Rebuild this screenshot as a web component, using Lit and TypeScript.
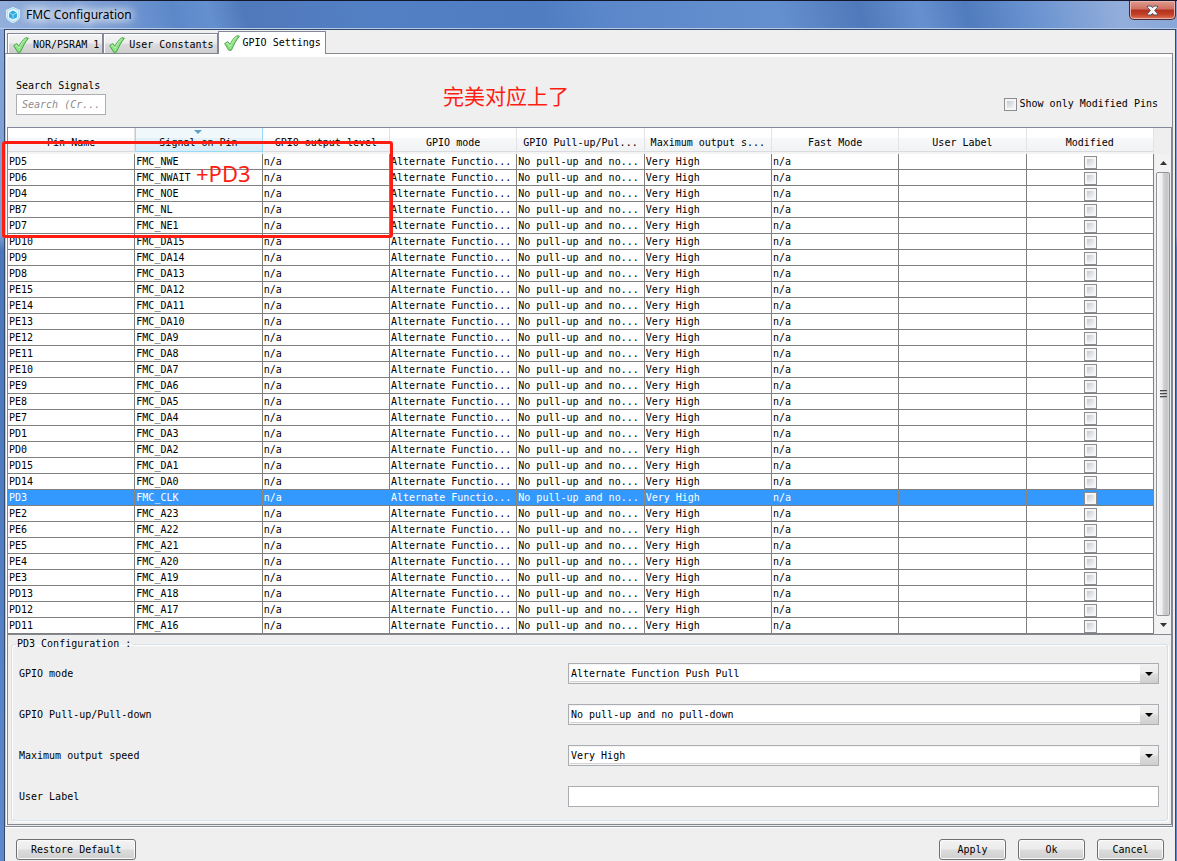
import { LitElement, html, css, svg, nothing } from "lit";
import { customElement, property, state } from "lit/decorators.js";
import { classMap } from "lit/directives/class-map.js";

interface Pin {
  pin: string;
  signal: string;
}

const row = (line: string): Pin => {
  const [pin, signal] = line.split(" ");
  return { pin, signal };
};

const PINS: Pin[] = [
  "PD5 FMC_NWE", "PD6 FMC_NWAIT", "PD4 FMC_NOE", "PB7 FMC_NL", "PD7 FMC_NE1",
  "PD10 FMC_DA15", "PD9 FMC_DA14", "PD8 FMC_DA13", "PE15 FMC_DA12", "PE14 FMC_DA11",
  "PE13 FMC_DA10", "PE12 FMC_DA9", "PE11 FMC_DA8", "PE10 FMC_DA7", "PE9 FMC_DA6",
  "PE8 FMC_DA5", "PE7 FMC_DA4", "PD1 FMC_DA3", "PD0 FMC_DA2", "PD15 FMC_DA1",
  "PD14 FMC_DA0", "PD3 FMC_CLK", "PE2 FMC_A23", "PE6 FMC_A22", "PE5 FMC_A21",
  "PE4 FMC_A20", "PE3 FMC_A19", "PD13 FMC_A18", "PD12 FMC_A17", "PD11 FMC_A16",
].map(row);

const COLUMNS = [
  "Pin Name", "Signal on Pin", "GPIO output level", "GPIO mode", "GPIO Pull-up/Pul...",
  "Maximum output s...", "Fast Mode", "User Label", "Modified",
];

const baseStyles = css`
  *, *::before, *::after { box-sizing: border-box; }
  button, input, select {
    font: inherit;
    color: inherit;
    margin: 0;
    appearance: none;
    border-radius: 0;
  }
  .check {
    display: block;
    width: 13px;
    height: 13px;
    border: 1px solid #8b8d90;
    background: linear-gradient(135deg, #c6cbd2, #f6f6f6) content-box, #f6f6f6;
    padding: 2px;
  }
  .check:checked { background: linear-gradient(#3a6ea5, #3a6ea5) content-box, #f4f4f4; }
`;

@customElement("title-bar")
class TitleBar extends LitElement {
  static styles = [baseStyles, css`
    :host {
      display: flex;
      align-items: flex-start;
      justify-content: space-between;
      height: 29px;
      border-top: 1px solid #14182c;
      border-bottom: 1px solid #b4cdec;
      background: linear-gradient(75deg, #93afdc 0, #7fa0d6 8%, #5c88ca 15%, #6590cf 18%, #5079bb 21%,
        #5380c4 32%, #507dc2 46%, #5c88cb 52%, #6590cf 66%, #4f79ba 73%, #6690cf 78%,
        #507bbd 82%, #6791cf 87%, #93aedb 95%, #86a6d8 100%);
    }
    .name { display: flex; align-items: center; gap: 6px; padding: 5px 0 0 6px; }
    .logo { width: 14px; height: 16px; flex: none; }
    h1 {
      margin: 0;
      font: 400 12px/18px "Noto Sans", sans-serif;
      color: #000;
      text-shadow: 0 0 8px #fff, 0 0 8px #fff, 0 0 12px #fff, 0 0 16px #e6eefa;
    }
    .close {
      display: grid;
      place-items: center;
      width: 47px;
      height: 19px;
      margin-right: 1px;
      padding: 0;
      border: 1px solid #4b2634;
      border-top: 0;
      border-radius: 0 0 5px 5px;
      box-shadow: inset 0 0 0 1px #e9b3aa;
      background: linear-gradient(#dd9c90 0, #cf6f60 45%, #b2301c 50%, #c3402a 75%, #dd7757 100%);
    }
    .close svg { width: 13px; height: 11px; }
  `];

  render() {
    return html`
      <div class="name">
        <svg class="logo" viewBox="0 0 14 16" aria-hidden="true">
          <path d="M7 0l7 3v6c0 3-3 5.600-7 7-4-1.400-7-4-7-7V3z" fill="#eaf7fd"/>
          <path d="M7 1.200l5.800 2.600v5.200c0 2.600-2.400 4.600-5.800 5.800C3.600 13.600 1.200 11.600 1.200 9V3.800z" fill="none" stroke="#7fcbea" stroke-width=".7"/>
          <path d="M7 3.500l4 2.200v4.600l-4 2.200-4-2.200V5.700z" fill="#2fa9df"/>
          <path d="M3 5.700l4 2.200 4-2.200M7 7.900v4.600" fill="none" stroke="#b9e6f8" stroke-width=".8"/>
        </svg>
        <h1>FMC Configuration</h1>
      </div>
      <button class="close" aria-label="Close">
        <svg viewBox="0 0 13 11" aria-hidden="true">
          <path d="M1.500 1h3.600l1.400 1.700L7.900 1h3.600v1.300L8.700 5.500l2.800 3.200V10H7.900L6.500 8.300 5.100 10H1.500V8.700l2.800-3.200-2.800-3.200z" fill="#f5f5f5" stroke="#535666" stroke-width="1"/>
        </svg>
      </button>
    `;
  }
}

@customElement("tab-strip")
class TabStrip extends LitElement {
  @property({ type: Array }) tabs: string[] = [];
  @property({ type: Number }) selected = 0;

  static styles = [baseStyles, css`
    :host { display: flex; align-items: flex-end; height: 23px; padding-left: 2px; margin-bottom: -1px; }
    .tab {
      display: flex;
      align-items: center;
      gap: 4px;
      height: 20px;
      margin-bottom: 1px;
      padding: 2px 3px 0 5px;
      border: 1px solid #83879a;
      border-bottom: 0;
      background: linear-gradient(#f4f4f4 0, #ececec 48%, #dcdcdc 52%, #cecece 100%);
      box-shadow: inset 1px 1px #fff;
      white-space: nowrap;
    }
    .tab.on { position: relative; height: 23px; margin: 0; padding: 0 4px 0 5px; gap: 3px; background: #fff; }
    .tick { width: 16px; height: 16px; flex: none; }
  `];

  render() {
    return this.tabs.map((t, i) => html`
      <button role="tab" aria-selected=${i === this.selected}
        class=${classMap({ tab: true, on: i === this.selected })}
        @click=${() => (this.selected = i)}>
        <svg class="tick" viewBox="0 0 16 16" aria-hidden="true">
          <path d="M.7 8.600l3.100-2 2.300 3C7.500 5.800 10.200 2.400 13 .7l2.400.5C12.400 4.800 9.600 10 7.400 15.200l-2.600.1z"
            fill="#8ee283" stroke="#39a03c" stroke-width=".9" stroke-linejoin="round"/>
          <path d="M2.200 8.900l1.300-1 2.500 3.300C8 7 10 4 12.800 1.800" fill="none" stroke="#c9f5c0" stroke-width=".9"/>
        </svg>
        <span>${t}</span>
      </button>`);
  }
}

@customElement("pin-table")
class PinTable extends LitElement {
  @property() selected = "PD3";

  static styles = [baseStyles, css`
    :host {
      display: flex;
      border: 1px solid #83879a;
      border-bottom-color: #83878f;
      background: #efefef;
    }
    .view { flex: 1; min-width: 0; }
    table { width: 100%; table-layout: fixed; border-collapse: separate; border-spacing: 0; }
    th {
      position: relative;
      height: 26px;
      padding: 5px 1px 0;
      border-right: 1px solid #e1e3e6;
      border-bottom: 2px solid #f4f4f4;
      background: linear-gradient(#fff 0, #fff 40%, #f7f8fa 42%, #f1f3f5 95%, #d9dbde 96%);
      font-weight: 400;
      text-align: center;
      white-space: nowrap;
      overflow: hidden;
    }
    th.sorted {
      border-right-color: #96d9f9;
      box-shadow: inset 1px 0 #96d9f9;
      background: linear-gradient(#f2f9fc 0, #f0f8fc 40%, #e2f1f9 42%, #d9edf7 94%, #96d9f9 95%);
    }
    .arrow { position: absolute; top: 2px; left: 50%; width: 8px; height: 4px; margin-left: -4px; }
    td {
      height: 16px;
      padding: 1px 0 0 1px;
      border-right: 1px solid #808080;
      border-bottom: 1px solid #808080;
      background: #fff;
      line-height: 14px;
      white-space: nowrap;
      overflow: hidden;
    }
    td .check { margin: 0 auto; }
    tr.on td { background: #3399ff; color: #fff; border-right-color: #8f8478; }
    .bar {
      display: flex;
      flex-direction: column;
      width: 17px;
      padding: 26px 1px 0 2px;
    }
    .step {
      display: grid;
      place-items: center;
      height: 18px;
      padding: 0;
      border: 0;
      background: #f2f2f2;
    }
    .step svg { width: 7px; height: 4px; }
    .thumb {
      flex: 1;
      display: grid;
      place-items: center;
      border: 1px solid #929498;
      border-radius: 2px;
      background: linear-gradient(90deg, #fafafa 0, #ededed 45%, #d2d3d6 50%, #c4c5c9 85%, #dcdcde 100%);
    }
    .thumb svg { width: 7px; height: 9px; }
  `];

  render() {
    return html`
      <div class="view"><table>
        <thead><tr>${COLUMNS.map((c, i) => html`
          <th class=${i === 1 ? "sorted" : ""}>${i === 1
            ? html`<svg class="arrow" viewBox="0 0 8 4" aria-hidden="true"><path d="M0 0h8L4 4z" fill="#5fa3c4"/></svg>`
            : nothing}${c}</th>`)}</tr></thead>
        <tbody>${PINS.map((p) => html`
          <tr class=${p.pin === this.selected ? "on" : ""} @click=${() => (this.selected = p.pin)}>
            <td>${p.pin}</td>
            <td>${p.signal}</td>
            <td>n/a</td>
            <td>Alternate Functio...</td>
            <td>No pull-up and no...</td>
            <td>Very High</td>
            <td>n/a</td>
            <td></td>
            <td><input class="check" type="checkbox" aria-label="${p.pin} modified"></td>
          </tr>`)}</tbody>
      </table></div>
      <div class="bar">
        <button class="step" aria-label="Scroll up">
          <svg viewBox="0 0 7 4" aria-hidden="true"><path d="M0 4h7L3.500 0z" fill="#333"/></svg>
        </button>
        <div class="thumb">
          <svg viewBox="0 0 7 9" aria-hidden="true">${[0, 3, 6].map((y) => svg`
            <path d="M0 ${y + 0.5}h7" stroke="#4a4a4a"/><path d="M0 ${y + 1.5}h7" stroke="#b5b5b5"/>`)}</svg>
        </div>
        <button class="step" aria-label="Scroll down">
          <svg viewBox="0 0 7 4" aria-hidden="true"><path d="M0 0h7L3.500 4z" fill="#333"/></svg>
        </button>
      </div>
    `;
  }
}

@customElement("pin-form")
class PinForm extends LitElement {
  @property() pin = "PD3";

  static styles = [baseStyles, css`
    :host { display: block; padding: 2px 3px 3px; border: 1px solid #83878f; border-top: 0; }
    fieldset {
      margin: 0;
      padding: 12px 8px 13px 7px;
      border: 1px solid #d5dfe5;
      border-radius: 3px;
      box-shadow: inset 1px 1px #fff, 1px 1px #fff;
    }
    legend { margin-left: -3px; padding: 0 2px 0 1px; line-height: 14px; }
    .grid {
      display: grid;
      grid-template-columns: 549fr 591fr;
      row-gap: 20px;
      align-items: center;
    }
    .field {
      width: 100%;
      height: 21px;
      padding: 0 3px;
      border: 1px solid #abadb3;
      background: #fff;
    }
    .combo { display: grid; }
    .combo select {
      grid-area: 1 / 1;
      padding: 0 20px 0 2px;
      box-shadow: inset 0 0 0 1px #f4f4f4, inset 0 -2px #d4d4d4;
    }
    .drop {
      grid-area: 1 / 1;
      justify-self: end;
      align-self: center;
      display: grid;
      place-items: center;
      width: 18px;
      height: 19px;
      margin-right: 1px;
      background: linear-gradient(#f2f2f2 0, #ebebeb 48%, #dddddd 52%, #cfcfcf 100%);
      pointer-events: none;
    }
    .drop svg { width: 8px; height: 4px; }
  `];

  private combo(id: string, label: string, value: string) {
    return html`
      <label for=${id}>${label}</label>
      <div class="combo">
        <select class="field" id=${id}><option>${value}</option></select>
        <span class="drop"><svg viewBox="0 0 8 4" aria-hidden="true"><path d="M0 0h8L4 4z" fill="#000"/></svg></span>
      </div>`;
  }

  render() {
    return html`
      <fieldset>
        <legend>${this.pin} Configuration :</legend>
        <div class="grid">
          ${this.combo("mode", "GPIO mode", "Alternate Function Push Pull")}
          ${this.combo("pull", "GPIO Pull-up/Pull-down", "No pull-up and no pull-down")}
          ${this.combo("speed", "Maximum output speed", "Very High")}
          <label for="label">User Label</label>
          <input class="field" id="label" type="text">
        </div>
      </fieldset>`;
  }
}

@customElement("app-root")
class AppRoot extends LitElement {
  @state() private tabs = ["NOR/PSRAM 1", "User Constants", "GPIO Settings"];

  static styles = [baseStyles, css`
    :host {
      display: block;
      position: relative;
      min-height: 100vh;
      background: linear-gradient(#86a4d8 0, #7d9ed4 235px, #4b77ba 250px, #4f7dc2 60%, #5c8acd 100%);
      font: 10px/14px "DejaVu Sans Mono", "Noto Sans CJK SC", monospace;
      color: #000;
      overflow: hidden;
    }
    .body {
      margin: 0 1px 0 4px;
      min-height: calc(100vh - 29px);
      border: 1px solid #33486b;
      border-bottom: 0;
      background: #efefef;
      padding-top: 1px;
    }
    .panel {
      margin-right: 2px;
      padding: 0 0 1px 1px;
      border: 1px solid #83878f;
      border-left-color: #c8cad0;
      box-shadow: inset 0 3px #fff, inset 1px 0 #fff, 0 1px #fff;
    }
    .tools {
      display: flex;
      justify-content: space-between;
      align-items: flex-end;
      padding: 25px 14px 12px 9px;
    }
    .search { display: grid; gap: 1px; }
    .search input {
      width: 90px;
      height: 21px;
      padding: 0 5px;
      border: 1px solid #abadb3;
      background: #fff;
    }
    .search input::placeholder { color: #8a8a8a; font-style: italic; opacity: 1; }
    .only { display: flex; align-items: center; gap: 3px; padding-bottom: 4px; }
    .actions { display: flex; gap: 12px; padding: 12px 11px 3px 11px; }
    .btn {
      min-width: 67px;
      height: 21px;
      padding: 0 14px;
      border: 1px solid #707070;
      border-radius: 3px;
      box-shadow: inset 0 0 0 1px #fafafa;
      background: linear-gradient(#f3f3f3 0, #ebebeb 48%, #dcdcdc 52%, #cfcfcf 100%);
    }
    .btn.narrow { padding: 0; }
    .btn.first { margin-right: auto; }
    .mark {
      position: absolute;
      left: 2px;
      top: 141px;
      width: 391px;
      height: 97px;
      border: 3px solid #ff1d12;
      border-radius: 3px;
      pointer-events: none;
    }
    .note {
      position: absolute;
      color: #ff1d12;
      white-space: nowrap;
      pointer-events: none;
      line-height: 28px;
    }
    .note.pin { left: 196px; top: 159px; font-family: "Noto Sans", sans-serif; font-size: 22px; }
    .note.ok { left: 443px; top: 81px; font-family: "Noto Sans CJK SC", sans-serif; font-size: 21px; }
  `];

  render() {
    return html`
      <title-bar></title-bar>
      <main class="body">
        <tab-strip role="tablist" .tabs=${this.tabs} .selected=${2}></tab-strip>
        <section class="panel">
          <div class="tools">
            <div class="search">
              <label for="q">Search Signals</label>
              <input id="q" type="text" placeholder="Search (Cr...">
            </div>
            <label class="only"><input class="check" type="checkbox">Show only Modified Pins</label>
          </div>
          <pin-table></pin-table>
          <pin-form></pin-form>
        </section>
        <div class="actions">
          <button class="btn first">Restore Default</button>
          <button class="btn narrow">Apply</button>
          <button class="btn narrow">Ok</button>
          <button class="btn narrow">Cancel</button>
        </div>
      </main>
      <div class="mark"></div>
      <span class="note pin">+PD3</span>
      <span class="note ok" lang="zh-CN">完美对应上了</span>
    `;
  }
}
